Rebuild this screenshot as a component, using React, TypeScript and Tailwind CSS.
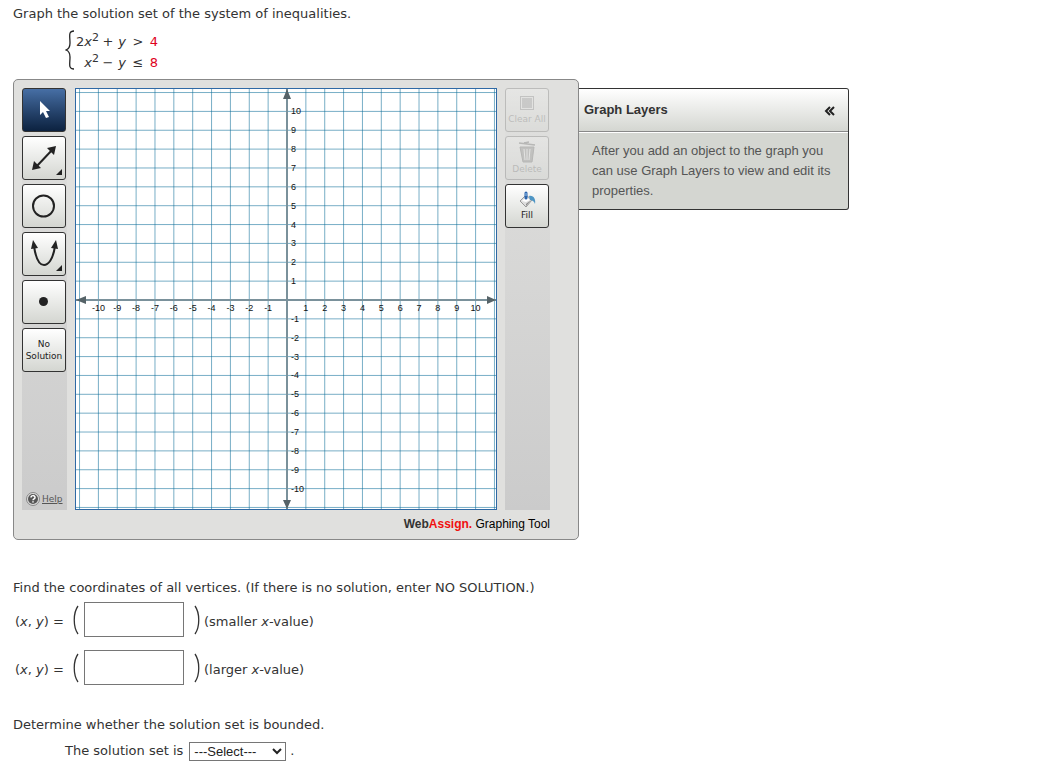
import { useState } from 'react'
import type { ReactNode } from 'react'

const SIZE = 420
const CENTER = 211
const STEP = 18.86

const TICKS = Array.from({ length: 21 }, (_, i) => i - 10)
const LINES = Array.from({ length: 23 }, (_, i) => i - 11)

type Tool = 'select' | 'line' | 'circle' | 'parabola' | 'point' | 'none'

function Corner() {
  return <path d="M39 32v6h-6z" fill="#222" />
}

const TOOLS: { id: Tool; label: string; icon: ReactNode }[] = [
  {
    id: 'select',
    label: 'Select',
    icon: <path d="M17 12v14l3-3 3 6 3-1-3-6h4z" fill="#fff" />,
  },
  {
    id: 'line',
    label: 'Line',
    icon: (
      <>
        <path d="M13 30L30 12" stroke="#222" strokeWidth="2" />
        <path d="M9 33l2-9 7 7zM33 9l-9 2 7 7z" fill="#222" />
        <Corner />
      </>
    ),
  },
  {
    id: 'circle',
    label: 'Circle',
    icon: <circle cx="20.5" cy="21" r="10.5" fill="none" stroke="#222" strokeWidth="2" />,
  },
  {
    id: 'parabola',
    label: 'Parabola',
    icon: (
      <>
        <path d="M11 13C13 27 17 32 21 32S30 27 32 13" fill="none" stroke="#222" strokeWidth="2" />
        <path d="M10 7l5 8-7 1zM33 7l2 9-7-1z" fill="#222" />
        <Corner />
      </>
    ),
  },
  { id: 'point', label: 'Point', icon: <circle cx="20.5" cy="20.5" r="4.5" fill="#222" /> },
]

const TOOL_BUTTON =
  'flex size-11 flex-col items-center justify-center rounded-[3px] border border-[#333]'
const LIGHT = 'bg-linear-to-b from-white to-[#d4d6d1]'
const BLUE = 'bg-linear-to-b from-[#476fa5] to-[#0c2240]'

function Graph() {
  return (
    <svg
      viewBox={`0 0 ${SIZE} ${SIZE}`}
      className="size-[422px] shrink-0 border border-[#2f69a5] bg-white font-['Liberation_Sans',Arial,sans-serif] text-[9px]"
      role="img"
      aria-label="Coordinate grid from -10 to 10"
    >
      <g stroke="#0a6c98" strokeOpacity="0.55" strokeWidth="1">
        {LINES.map((n) => (
          <g key={n}>
            <line x1={CENTER + n * STEP} x2={CENTER + n * STEP} y1="0" y2={SIZE} />
            <line y1={CENTER + n * STEP} y2={CENTER + n * STEP} x1="0" x2={SIZE} />
          </g>
        ))}
      </g>
      <g stroke="#7a919b" strokeWidth="2">
        <line x1="0" x2={SIZE} y1={CENTER} y2={CENTER} />
        <line y1="0" y2={SIZE} x1={CENTER} x2={CENTER} />
      </g>
      <path
        d="M0 211l10-4v8zM420 211l-9-4v8zM211 0l-4 10h8zM211 420l-4-9h8z"
        fill="#566368"
      />
      <g fill="#111">
        {TICKS.filter((n) => n !== 0).map((n) => (
          <g key={n}>
            <text x={CENTER + n * STEP} y={CENTER + 11} textAnchor="middle">
              {n}
            </text>
            <text x={CENTER + 4} y={CENTER + 3 - n * STEP}>
              {n}
            </text>
          </g>
        ))}
      </g>
    </svg>
  )
}

function GraphingTool() {
  const [tool, setTool] = useState<Tool>('select')

  return (
    <div className="flex items-start">
      <div className="rounded-[5px] border border-[#888] bg-[#e0e0de] pt-2 pr-7 pb-[5px] pl-2">
        <div className="flex gap-2">
          {/* drawing tools */}
          <div className="flex w-[45px] flex-col gap-1 bg-linear-to-b from-[#e0e0de] to-[#cbcbcb]">
            {TOOLS.map((t) => (
              <button
                key={t.id}
                type="button"
                aria-label={t.label}
                onClick={() => setTool(t.id)}
                className={`${TOOL_BUTTON} ${tool === t.id ? BLUE : LIGHT}`}
              >
                <svg viewBox="0 0 42 42" className="size-[42px]">
                  {t.icon}
                </svg>
              </button>
            ))}
            <button
              type="button"
              onClick={() => setTool('none')}
              className={`${TOOL_BUTTON} ${tool === 'none' ? BLUE : LIGHT} text-[9px] leading-3 text-[#222]`}
            >
              No
              <br />
              Solution
            </button>
            <a href="#help" className="mt-auto flex items-center gap-0.5 pb-1 pl-1 text-[9px] leading-3 text-[#555] underline">
              <svg viewBox="0 0 14 14" className="size-3.5">
                <circle cx="7" cy="7" r="6.5" fill="#ddd" stroke="#888" />
                <circle cx="7" cy="7" r="5" fill="#555" />
                <path
                  d="M5 5.6C5 3 9 3 9 5.4 9 7 7 6.8 7 8.3M7 9.3v1.3"
                  fill="none"
                  stroke="#fff"
                  strokeWidth="1.5"
                />
              </svg>
              Help
            </a>
          </div>

          <Graph />

          {/* actions */}
          <div className="flex w-[45px] flex-col gap-1 bg-linear-to-b from-[#e0e0de] to-[#cbcbcb] text-[9px] leading-3">
            <button type="button" disabled className={`${TOOL_BUTTON} ${LIGHT} whitespace-nowrap opacity-20`}>
              <svg viewBox="0 0 16 16" className="mb-0.5 size-4">
                <rect x="1.5" y="1.5" width="13" height="13" fill="#eee" stroke="#555" />
                <rect x="3" y="3" width="10" height="10" fill="#777" />
              </svg>
              Clear All
            </button>
            <button type="button" disabled className={`${TOOL_BUTTON} ${LIGHT} opacity-20`}>
              <svg viewBox="0 0 18 22" className="h-[22px] w-[18px] shrink-0" fill="none" stroke="#222">
                <path d="M1 2l16 2M6 2l5-1" strokeWidth="1.5" />
                <path d="M2 6h14l-2 15H5z" fill="#555" />
                <path d="M6 8l1 11M9 8v11M12 8l-1 11" stroke="#fff" />
              </svg>
              Delete
            </button>
            <button type="button" className={`${TOOL_BUTTON} ${LIGHT} text-[#222]`}>
              <svg viewBox="0 0 18 18" className="size-[18px]">
                <path d="M2 10l6-6 6 5-6 7z" fill="#ddd" stroke="#999" />
                <path d="M4 10l4-4 4 3-4 2z" fill="#fff" />
                <path d="M8 13l5-4-5 6z" fill="#888" />
                <path d="M11 5c5-1 7 4 6 8-1-3-3-4-5-4z" fill="#4f96c4" />
                <path d="M8 2v5" stroke="#2b65ad" strokeWidth="3" strokeLinecap="round" />
                <path d="M8 2v3" stroke="#9bc5ee" />
              </svg>
              Fill
            </button>
          </div>
        </div>
        <p className="mt-1 text-right font-['Liberation_Sans',Arial,sans-serif] text-xs leading-5 text-black">
          <b className="text-[#333]">Web</b>
          <b className="text-[#f01010]">Assign.</b> Graphing Tool
        </p>
      </div>

      {/* layers panel */}
      <section className="mt-[9px] w-[270px] rounded-r-[3px] border border-l-0 border-[#333] bg-[#d4d6d1] font-['Liberation_Sans',Arial,sans-serif]">
        <header className="flex h-[43px] items-center justify-between rounded-tr-[2px] border-b border-[#888] bg-linear-to-b from-white to-[#d4d6d1] pr-3 pl-[5px]">
          <h2 className="text-[13px] font-bold text-[#333]">Graph Layers</h2>
          <button type="button" aria-label="Collapse Graph Layers">
            <svg viewBox="0 0 12 12" className="mt-0.5 size-3" fill="none" stroke="#222" strokeWidth="2">
              <path d="M6 2L2 6l4 4M10 2L6 6l4 4" />
            </svg>
          </button>
        </header>
        <p className="border-t border-white px-[13px] py-2 text-[13px] leading-5 text-[#555]">
          After you add an object to the graph you can use Graph Layers to view and edit its
          properties.
        </p>
      </section>
    </div>
  )
}

function Paren({ close = false }: { close?: boolean }) {
  return (
    <svg viewBox="0 0 6 30" className="h-[30px] w-1.5" fill="none" stroke="#333" strokeWidth="1.3">
      <path d={close ? 'M1 1C6 8 6 22 1 29' : 'M5 1C0 8 0 22 5 29'} />
    </svg>
  )
}

function VertexField({ id, size }: { id: string; size: string }) {
  return (
    <div className="flex h-[35px] items-center pl-0.5">
      <label htmlFor={id} className="w-[58px] pt-1">
        (<i>x</i>, <i>y</i>) =
      </label>
      <Paren />
      <input
        id={id}
        type="text"
        className="mr-2.5 ml-[5px] h-[35px] w-[100px] border border-[#767676] bg-white px-1"
      />
      <Paren close />
      <span className="pt-1 pl-1">
        ({size} <i>x</i>-value)
      </span>
    </div>
  )
}

export default function App() {
  return (
    <main className="bg-white px-[13px] py-1 font-['DejaVu_Sans',Verdana,sans-serif] text-[13px] leading-5 text-[#333]">
      <p>Graph the solution set of the system of inequalities.</p>

      <div className="mt-1.5 mb-[9px] flex h-10 items-center pl-[52px]">
        <svg viewBox="0 0 10 40" className="h-10 w-2.5" fill="none" stroke="#222" strokeWidth="1.3">
          <path d="M9 1C3 1 5 6 5 13c0 4-1 6-4 7 3 1 4 3 4 7 0 7-2 12 4 12" />
        </svg>
        <div className="mt-1 grid grid-cols-[24px_18px_10px_22px_10px] text-center leading-[21px]">
          <span className="text-right">2<i>x</i><sup className="text-[11px]">2</sup></span>
          <span>+</span>
          <i>y</i>
          <span>&gt;</span>
          <span className="text-[#e0001b]">4</span>
          <span className="text-right"><i>x</i><sup className="text-[11px]">2</sup></span>
          <span>−</span>
          <i>y</i>
          <span>≤</span>
          <span className="text-[#e0001b]">8</span>
        </div>
      </div>

      <GraphingTool />

      <p className="mt-[38px]">
        Find the coordinates of all vertices. (If there is no solution, enter NO SOLUTION.)
      </p>
      <div className="mt-1 flex flex-col gap-[13px]">
        <VertexField id="smaller" size="smaller" />
        <VertexField id="larger" size="larger" />
      </div>

      <p className="mt-[30px]">Determine whether the solution set is bounded.</p>
      <div className="mt-1.5 flex items-center pl-[52px]">
        <label htmlFor="bounded">The solution set is</label>
        <select
          id="bounded"
          className="mr-1 ml-1.5 h-[19px] w-[97px] border border-[#767676] bg-white font-['Liberation_Sans',Arial,sans-serif] text-[13px] leading-4 text-[#222]"
        >
          <option>---Select---</option>
          <option>bounded</option>
          <option>not bounded</option>
        </select>
        .
      </div>
    </main>
  )
}
